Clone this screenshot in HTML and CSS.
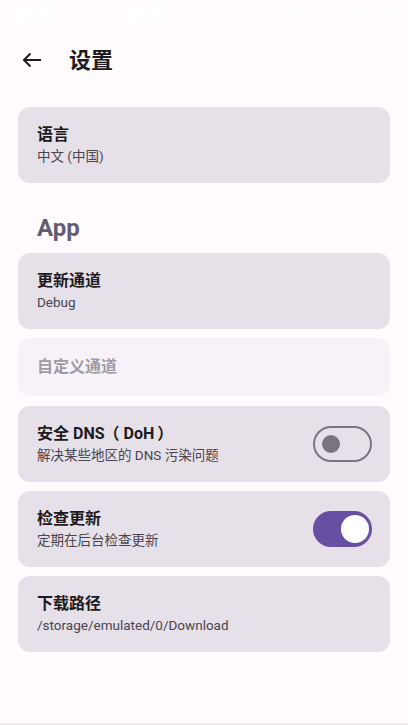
FILE: index.html
```html
<!DOCTYPE html>
<html lang="zh-CN">
<head>
    <meta charset="UTF-8">
    <meta name="viewport" content="width=device-width, initial-scale=1.0">
    <title>设置</title>
    <link rel="stylesheet" href="styles.css">
</head>
<body>
    <div class="screen">
        <div class="status-bar">
            <div class="status-left">
                <span class="sq"></span>
                <span class="sq"></span>
                <svg class="ico" width="12" height="14" viewBox="0 0 12 14"><path d="M6 1v8M2 6l4 4 4-4M1 13h10" stroke="#fff" stroke-width="2" fill="none"/></svg>
                <svg class="ico" width="12" height="14" viewBox="0 0 12 14"><path d="M6 1v8M2 6l4 4 4-4M1 13h10" stroke="#fff" stroke-width="2" fill="none"/></svg>
                <svg class="ico" width="12" height="14" viewBox="0 0 12 14"><path d="M6 1v8M2 6l4 4 4-4M1 13h10" stroke="#fff" stroke-width="2" fill="none"/></svg>
                <span class="sq"></span>
                <span class="sq"></span>
                <svg class="ico" width="12" height="12" viewBox="0 0 12 12"><circle cx="6" cy="6" r="4" stroke="#fff" stroke-width="2" fill="none"/></svg>
            </div>
            <div class="status-right">
                <svg width="10" height="14" viewBox="0 0 10 14"><path d="M5 0a5 5 0 0 1 5 5c0 4-5 9-5 9S0 9 0 5a5 5 0 0 1 5-5z" fill="#fff"/></svg>
                <svg width="16" height="12" viewBox="0 0 16 12"><path d="M0 3a12 12 0 0 1 16 0L8 12z" fill="#fff"/></svg>
                <svg width="12" height="12" viewBox="0 0 12 12"><path d="M12 0v12H0z" fill="#fff"/></svg>
                <svg width="8" height="14" viewBox="0 0 8 14"><rect x="0" y="1" width="8" height="13" rx="1" fill="#fff"/></svg>
                <span class="clock">5:09</span>
            </div>
        </div>

        <div class="top-bar">
            <svg class="back" width="20" height="16" viewBox="0 0 20 16">
                <path d="M19 8H2M8.5 1.5L2 8l6.5 6.5" stroke="#1d1b20" stroke-width="2" fill="none"/>
            </svg>
            <h1>设置</h1>
        </div>

        <div class="content">
            <div class="card">
                <div class="card-text">
                    <div class="title">语言</div>
                    <div class="subtitle">中文 (中国)</div>
                </div>
            </div>

            <h2>App</h2>

            <div class="list">
                <div class="card">
                    <div class="card-text">
                        <div class="title">更新通道</div>
                        <div class="subtitle">Debug</div>
                    </div>
                </div>
                <div class="card disabled">
                    <div class="card-text">
                        <div class="title">自定义通道</div>
                    </div>
                </div>
                <div class="card">
                    <div class="card-text">
                        <div class="title">安全 DNS<span class="open">（</span>DoH<span class="close">）</span></div>
                        <div class="subtitle">解决某些地区的 DNS 污染问题</div>
                    </div>
                    <div class="switch"><span class="thumb"></span></div>
                </div>
                <div class="card">
                    <div class="card-text">
                        <div class="title">检查更新</div>
                        <div class="subtitle">定期在后台检查更新</div>
                    </div>
                    <div class="switch on"><span class="thumb"></span></div>
                </div>
                <div class="card">
                    <div class="card-text">
                        <div class="title">下载路径</div>
                        <div class="subtitle">/storage/emulated/0/Download</div>
                    </div>
                </div>
            </div>
        </div>
    </div>
</body>
</html>
```

FILE: styles.css
```css
body {
    margin: 0;
    padding: 0;
    background-color: #fffbfe;
    font-family: Roboto, "Noto Sans CJK SC", sans-serif;
    color: #1d1b20;
}
.screen {
    min-height: 723px;
    border-bottom: 2px solid #efebef;
}
.status-bar {
    height: 28px;
    display: flex;
    align-items: center;
    justify-content: space-between;
    padding: 0 8px 0 12px;
}
.status-left, .status-right {
    display: flex;
    align-items: center;
    gap: 8px;
}
.sq {
    width: 18px;
    height: 18px;
    background-color: #fff;
    border-radius: 2px;
}
.clock {
    color: #fff;
    font-size: 14px;
    font-weight: 500;
}
.top-bar {
    height: 60px;
    padding-bottom: 4px;
    display: flex;
    align-items: center;
    padding-left: 22px;
}
.back {
    margin-right: 27px;
    margin-top: 4px;
}
h1 {
    margin: 0;
    font-size: 22px;
    font-weight: 700;
}
.content {
    padding: 15px 18px 0;
}
.list {
    display: flex;
    flex-direction: column;
    gap: 9.25px;
}
.card {
    display: flex;
    align-items: center;
    justify-content: space-between;
    min-height: 76px;
    box-sizing: border-box;
    padding: 17px 18px 17px 19px;
    background-color: #e6e0e9;
    border-radius: 12px;
}
.title {
    font-size: 16px;
    font-weight: 700;
    line-height: 22px;
}
.title .open {
    margin: 0 4px 0 -1px;
}
.title .close {
    margin-left: 3px;
}
.subtitle {
    font-size: 13.5px;
    line-height: 20px;
    color: #49454f;
}
.card.disabled {
    min-height: 58px;
    background-color: #f6f2f7;
}
.card.disabled .title {
    color: #9e9aa3;
    font-weight: 600;
}
h2 {
    margin: 29px 0 9px 19px;
    font-size: 24px;
    line-height: 32px;
    font-weight: 700;
    color: #625b71;
}
.switch {
    position: relative;
    width: 59px;
    height: 36px;
    box-sizing: border-box;
    border: 2px solid #79747e;
    border-radius: 18px;
    flex-shrink: 0;
}
.switch .thumb {
    position: absolute;
    left: 7px;
    top: 7px;
    width: 18px;
    height: 18px;
    border-radius: 50%;
    background-color: #79747e;
}
.switch.on {
    background-color: #6750a4;
    border-color: #6750a4;
}
.switch.on .thumb {
    left: 26px;
    top: 2px;
    width: 28px;
    height: 28px;
    background-color: #fff;
}
```
